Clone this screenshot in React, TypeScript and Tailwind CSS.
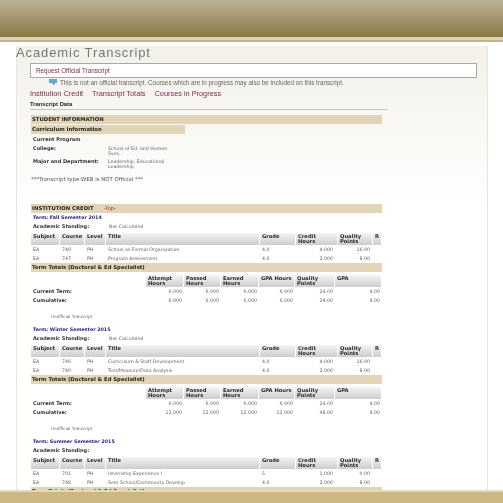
const V = "font-['DejaVu_Sans',sans-serif]";

function Bar({ children, w = "w-[351px]", mt = "" }: { children: React.ReactNode; w?: string; mt?: string }) {
  return (
    <div className={`${w} ${mt} h-[9px] bg-[#e1d4b7] pl-[1px] flex items-center text-[5.3px] font-bold text-[#222] whitespace-pre`}>{children}</div>
  );
}

const head = "bg-gradient-to-b from-[#f4f4f4] to-[#cdcdcd] font-bold text-[#2a2a2a] text-[5.2px] leading-[5px] pt-[1px] pl-[2px] h-[12px] border-r border-white";
const courseCols = "grid-cols-[29px_25px_21px_154px_36px_42px_35px_9px]";
const totalCols = "grid-cols-[115px_38px_37px_38px_36px_40px_47px]";

function CourseTable({ rows }: { rows: string[][] }) {
  return (
    <div className="w-[351px]">
      <div className={`grid ${courseCols}`}>
        <div className={head}>Subject</div>
        <div className={head}>Course</div>
        <div className={head}>Level</div>
        <div className={head}>Title</div>
        <div className={head}>Grade</div>
        <div className={head}>Credit<br />Hours</div>
        <div className={head}>Quality<br />Points</div>
        <div className={head}>R</div>
      </div>
      {rows.map((r) => (
        <div key={r[0] + r[1]} className={`grid ${courseCols} h-[9px] items-center text-[4.7px] text-[#666]`}>
          <div className="pl-[2px]">EA</div>
          <div className="pl-[2px]">{r[0]}</div>
          <div className="pl-[2px]">PH</div>
          <div className="pl-[2px] whitespace-nowrap">{r[1]}</div>
          <div className="pl-[2px]">{r[2]}</div>
          <div className="text-right pr-[5px]">{r[3]}</div>
          <div className="text-right pr-[3px]">{r[4]}</div>
          <div />
        </div>
      ))}
    </div>
  );
}

function Totals({ cur, cum }: { cur: string[]; cum: string[] }) {
  const Row = ({ label, v }: { label: string; v: string[] }) => (
    <div className={`grid ${totalCols} h-[9px] items-center text-[4.7px] text-[#666]`}>
      <div className="pl-[2px] font-bold text-[#333] text-[5px]">{label}</div>
      {v.map((x, i) => (
        <div key={i} className="text-right pr-[2px]">{x}</div>
      ))}
    </div>
  );
  return (
    <div className="w-[351px]">
      <div className={`grid ${totalCols} mt-[3px]`}>
        <div />
        <div className={head}>Attempt<br />Hours</div>
        <div className={head}>Passed<br />Hours</div>
        <div className={head}>Earned<br />Hours</div>
        <div className={head}>GPA Hours</div>
        <div className={head}>Quality<br />Points</div>
        <div className={head}>GPA</div>
      </div>
      <Row label="Current Term:" v={cur} />
      <Row label="Cumulative:" v={cum} />
    </div>
  );
}

function Term({ term, standing, rows, cur, cum }: { term: string; standing: string; rows: string[][]; cur?: string[]; cum?: string[] }) {
  return (
    <div>
      <div className="h-[9px] flex items-center pl-[2px] text-[4.8px] font-bold text-[#22228a]">{term}</div>
      <div className="h-[9px] flex items-center pl-[2px] text-[5px] font-bold text-[#333]">
        <span className="w-[76px]">Academic Standing:</span>
        <span className="font-normal text-[#666] text-[4.7px]">{standing}</span>
      </div>
      <div className="mt-[2px]"><CourseTable rows={rows} /></div>
      <Bar>Term Totals (Doctoral &amp; Ed Specialist)</Bar>
      {cur && cum && (
        <>
          <Totals cur={cur} cum={cum} />
          <div className="h-[9px] mt-[8px] pl-[20px] flex items-center text-[4.2px] text-[#666]">Unofficial Transcript</div>
          <div className="h-[3px]" />
        </>
      )}
    </div>
  );
}

export default function App() {
  return (
    <div className="h-[503px] w-[503px] overflow-hidden bg-white flex flex-col font-['Liberation_Sans',sans-serif] blur-[0.35px]">
      <header className="h-[37px] shrink-0 bg-gradient-to-b from-[#bdb396] to-[#8a7641]" />
      <div className="h-[3px] shrink-0 bg-[#d9d2bc]" />
      <div className="h-[2px] shrink-0 bg-[#c2b48d]" />
      <main className="flex-1 min-h-0 overflow-hidden pl-[16px] pr-[15px] pt-[2px]">
        <div className="h-full border-l border-r border-[#e8e3d3] bg-gradient-to-b from-[#f2f0e9] to-white bg-[length:100%_160px] bg-no-repeat">
          <h1 className="-ml-[1px] mt-[2px] h-[13px] flex items-center text-[13px] tracking-[0.9px] text-[#777] whitespace-nowrap">Academic Transcript</h1>
          <div className="pl-[13px] pt-[4px]">
            <div className="h-[15px] w-[447px] border border-[#a9a9a9] bg-white flex items-center pl-[5px] text-[6.3px] text-[#7a2a52]">Request Official Transcript</div>
            <div className="h-[10px] flex items-center pl-[19px] text-[6.3px] text-[#666] whitespace-nowrap">
              <svg viewBox="0 0 8 6" className="w-[8px] h-[6px] mr-[3px] -mt-[2px]">
                <rect x="0" y="0" width="8" height="4" fill="#6aa5d8" />
                <path d="M3 4h3l-1 2z" fill="#4f86b8" />
              </svg>
              This is not an official transcript. Courses which are in progress may also be included on this transcript.
            </div>
            <div className="h-[11px] flex items-center gap-x-[9px] text-[7.35px] text-[#7a2a52]">
              <span>Institution Credit</span><span>Transcript Totals</span><span>Courses in Progress</span>
            </div>
            <div className="h-[10px] flex items-center text-[5.8px] font-bold text-[#222]">Transcript Data</div>
            <div className="h-[1px] w-[358px] bg-[#c8c6b8]" />
            <div className={`pl-[1px] pt-[5px] ${V}`}>
              <Bar>STUDENT INFORMATION</Bar>
              <Bar w="w-[154px]" mt="mt-[1px]">Curriculum Information</Bar>
              <div className="w-[154px] text-[4.7px] text-[#666] pl-[2px] pt-[1px]">
                <div className="h-[9px] flex items-center font-bold text-[#333] text-[5px]">Current Program</div>
                <div className="flex">
                  <div className="w-[75px] font-bold text-[#333] text-[5px] leading-[5px] pt-[2px]">College:</div>
                  <div className="w-[70px] leading-[5px] pt-[2px]">School of Ed. and Human Svcs.</div>
                </div>
                <div className="flex mt-[3px]">
                  <div className="w-[75px] font-bold text-[#333] text-[5px] leading-[5px]">Major and Department:</div>
                  <div className="w-[70px] leading-[5px]">Leadership, Educational Leadership</div>
                </div>
              </div>
              <div className="h-[9px] mt-[6px] flex items-center text-[5.4px] text-[#555] whitespace-nowrap">***Transcript type:WEB is NOT Official ***</div>
              <div className="h-[20px]" />
              <Bar>
                INSTITUTION CREDIT<span className="text-[#a33] font-normal ml-[10px]">-Top-</span>
              </Bar>
              <Term
                term="Term: Fall Semester 2014"
                standing="Not Calculated"
                rows={[
                  ["740", "School as Formal Organization", "4.0", "4.000", "16.00"],
                  ["747", "Program Assessment", "4.0", "2.000", "8.00"],
                ]}
                cur={["6.000", "6.000", "6.000", "6.000", "24.00", "4.00"]}
                cum={["6.000", "6.000", "6.000", "6.000", "24.00", "4.00"]}
              />
              <Term
                term="Term: Winter Semester 2015"
                standing="Not Calculated"
                rows={[
                  ["746", "Curriculum & Staff Development", "4.0", "4.000", "16.00"],
                  ["749", "Test/Measure/Data Analysis", "4.0", "2.000", "8.00"],
                ]}
                cur={["6.000", "6.000", "6.000", "6.000", "24.00", "4.00"]}
                cum={["12.000", "12.000", "12.000", "12.000", "48.00", "4.00"]}
              />
              <Term
                term="Term: Summer Semester 2015"
                standing=""
                rows={[
                  ["701", "Internship Experience I", "S", "1.000", "0.00"],
                  ["748", "Sem School/Community Develop", "4.0", "2.000", "8.00"],
                ]}
              />
            </div>
          </div>
        </div>
      </main>
      <div className="h-[2px] shrink-0 bg-[#e3d8bb]" />
      <footer className="h-[11px] shrink-0 bg-[#cdb783]" />
    </div>
  );
}
